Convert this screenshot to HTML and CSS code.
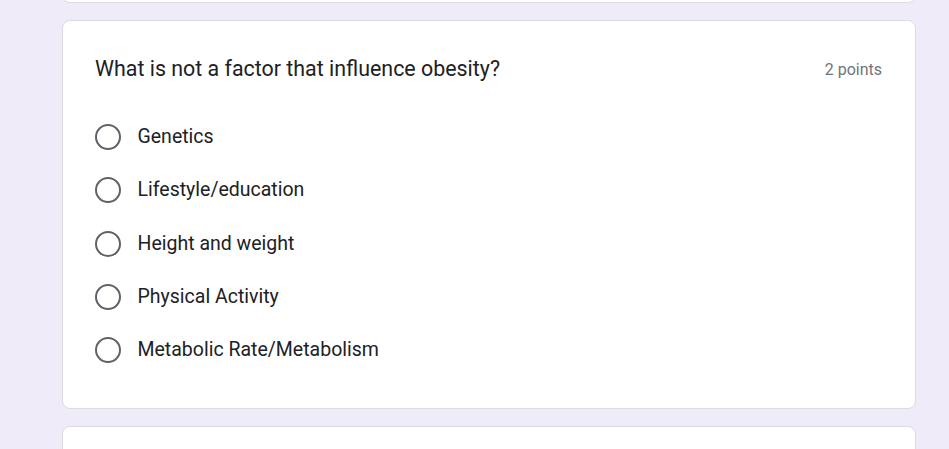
FILE: index.html
```html
<!DOCTYPE html>
<html>
<head>
<meta charset="utf-8">
<link rel="stylesheet" href="styles.css">
</head>
<body>
<div class="page">
  <div class="card card-prev"></div>
  <div class="card card-main">
    <div class="header">
      <div class="title">What is not a factor that influence obesity?</div>
      <div class="points">2 points</div>
    </div>
    <div class="options">
      <div class="option"><span class="radio"></span><span class="label">Genetics</span></div>
      <div class="option"><span class="radio"></span><span class="label">Lifestyle/education</span></div>
      <div class="option"><span class="radio"></span><span class="label">Height and weight</span></div>
      <div class="option"><span class="radio"></span><span class="label">Physical Activity</span></div>
      <div class="option"><span class="radio"></span><span class="label">Metabolic Rate/Metabolism</span></div>
    </div>
  </div>
  <div class="card card-next"></div>
</div>
</body>
</html>
```
FILE: styles.css
```css
html, body {
  margin: 0;
  padding: 0;
  background: #f0ebf8;
  font-family: Roboto, "Noto Sans", Arial, sans-serif;
  overflow: hidden;
}
.page {
  height: 449px;
  padding-left: 62px;
  display: flex;
  flex-direction: column;
  gap: 17px;
  overflow: hidden;
}
.card {
  box-sizing: border-box;
  width: 854px;
  background: #fff;
  border: 1px solid #dadce0;
  border-radius: 8px;
  flex-shrink: 0;
}
.card-prev {
  height: 40px;
  margin-top: -37px;
}
.card-main {
  padding: 23px 33px 32px 32px;
}
.card-next {
  height: 40px;
}
.header {
  height: 48px;
  display: flex;
  align-items: center;
  justify-content: space-between;
}
.title {
  font-size: 21.4px;
  color: #202124;
}
.points {
  font-size: 16px;
  color: #70757a;
  padding-top: 3px;
}
.options {
  margin-top: 18px;
  display: flex;
  flex-direction: column;
}
.option {
  height: 53.25px;
  display: flex;
  align-items: center;
}
.radio {
  box-sizing: border-box;
  width: 26px;
  height: 26px;
  border: 2.7px solid #5f6368;
  border-radius: 50%;
  flex-shrink: 0;
  margin-top: 1px;
}
.label {
  margin-left: 16.5px;
  font-size: 19.5px;
  color: #202124;
}
```
